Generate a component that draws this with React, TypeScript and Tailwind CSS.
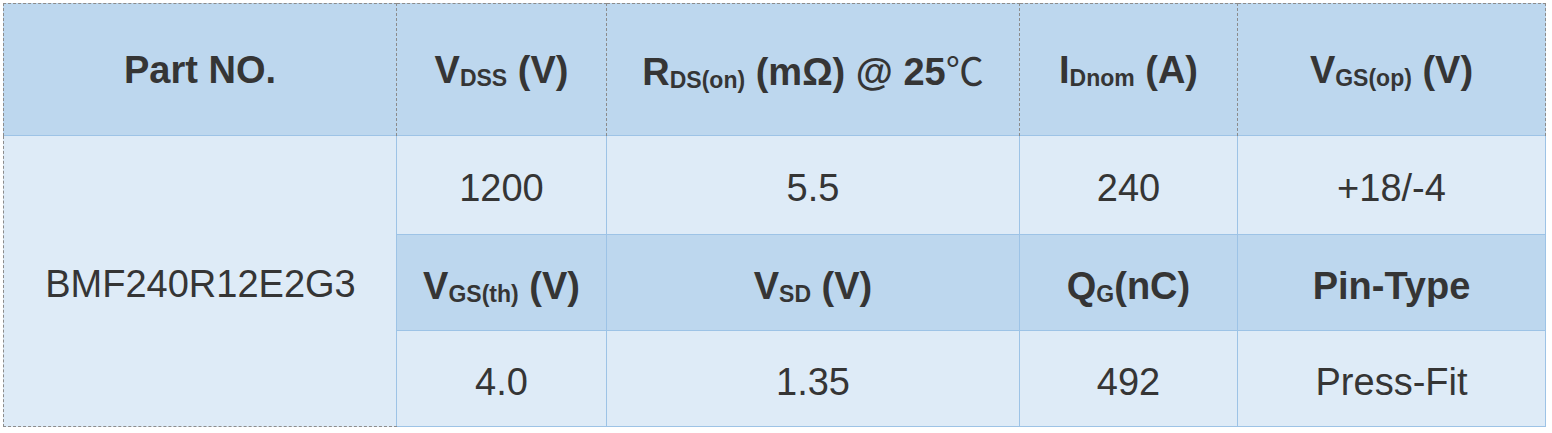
import React from 'react';

const font = { fontFamily: '"Liberation Sans", Arial, sans-serif' };

// small subscript part of a symbol, e.g. the "DSS" of VDSS
const Sub = ({ children }: { children: React.ReactNode }) => (
  <span className="text-[23px] align-[-3px]">{children}</span>
);

const App: React.FC = () => {
  return (
    <div className="w-[1552px] h-[433px] bg-white pl-[3px] pt-[3px] text-[#353535] text-[38px]" style={font}>
      <div className="grid grid-cols-[394px_210px_413px_218px_308px] grid-rows-[133px_99px_96px_96px]">
        {/* Header row */}
        <div className="flex items-center justify-center bg-[#bdd7ee] font-bold border-t border-l border-r border-dashed border-[#8c8c8c] border-b-0 shadow-[inset_0_-1px_0_#9dc3e6]">
          Part NO.
        </div>
        <div className="flex items-center justify-center bg-[#bdd7ee] font-bold border-t border-r border-dashed border-[#8c8c8c] shadow-[inset_0_-1px_0_#9dc3e6]">
          <span>
            V<Sub>DSS</Sub> (V)
          </span>
        </div>
        <div className="flex items-center justify-center bg-[#bdd7ee] font-bold border-t border-r border-dashed border-[#8c8c8c] shadow-[inset_0_-1px_0_#9dc3e6]">
          <span>
            R<Sub>DS(on)</Sub> (mΩ) @ 25
            <span className="font-normal text-[38px]" style={{ fontFamily: '"Noto Sans CJK SC", "Liberation Serif", serif' }}>
              ℃
            </span>
          </span>
        </div>
        <div className="flex items-center justify-center bg-[#bdd7ee] font-bold border-t border-r border-dashed border-[#8c8c8c] shadow-[inset_0_-1px_0_#9dc3e6]">
          <span>
            I<Sub>Dnom</Sub> (A)
          </span>
        </div>
        <div className="flex items-center justify-center bg-[#bdd7ee] font-bold border-t border-r border-dashed border-[#8c8c8c] shadow-[inset_0_-1px_0_#9dc3e6]">
          <span>
            V<Sub>GS(op)</Sub> (V)
          </span>
        </div>

        {/* Part number spans the three body rows */}
        <div className="row-span-3 flex items-center justify-center pt-[7px] bg-[#deebf7] border-l border-b border-dashed border-[#8c8c8c] shadow-[inset_-1px_0_0_#9dc3e6]">
          BMF240R12E2G3
        </div>

        {/* Row 1 values */}
        <div className="flex items-center justify-center pt-[6px] bg-[#deebf7] border-r border-b border-[#9dc3e6]">1200</div>
        <div className="flex items-center justify-center pt-[6px] bg-[#deebf7] border-r border-b border-[#9dc3e6]">5.5</div>
        <div className="flex items-center justify-center pt-[6px] bg-[#deebf7] border-r border-b border-[#9dc3e6]">240</div>
        <div className="flex items-center justify-center pt-[6px] bg-[#deebf7] border-r border-b border-[#9dc3e6]">+18/-4</div>

        {/* Row 2 labels */}
        <div className="flex items-center justify-center pt-[8px] bg-[#bdd7ee] font-bold border-r border-b border-[#9dc3e6]">
          <span>
            V<Sub>GS(th)</Sub> (V)
          </span>
        </div>
        <div className="flex items-center justify-center pt-[8px] bg-[#bdd7ee] font-bold border-r border-b border-[#9dc3e6]">
          <span>
            V<Sub>SD</Sub> (V)
          </span>
        </div>
        <div className="flex items-center justify-center pt-[8px] bg-[#bdd7ee] font-bold border-r border-b border-[#9dc3e6]">
          <span>
            Q<Sub>G</Sub>(nC)
          </span>
        </div>
        <div className="flex items-center justify-center pt-[8px] bg-[#bdd7ee] font-bold border-r border-b border-[#9dc3e6]">
          Pin-Type
        </div>

        {/* Row 3 values */}
        <div className="flex items-center justify-center pt-[8px] bg-[#deebf7] border-r border-b border-[#9dc3e6]">4.0</div>
        <div className="flex items-center justify-center pt-[8px] bg-[#deebf7] border-r border-b border-[#9dc3e6]">1.35</div>
        <div className="flex items-center justify-center pt-[8px] bg-[#deebf7] border-r border-b border-[#9dc3e6]">492</div>
        <div className="flex items-center justify-center pt-[8px] bg-[#deebf7] border-r border-b border-[#9dc3e6]">Press-Fit</div>
      </div>
    </div>
  );
};

export default App;
